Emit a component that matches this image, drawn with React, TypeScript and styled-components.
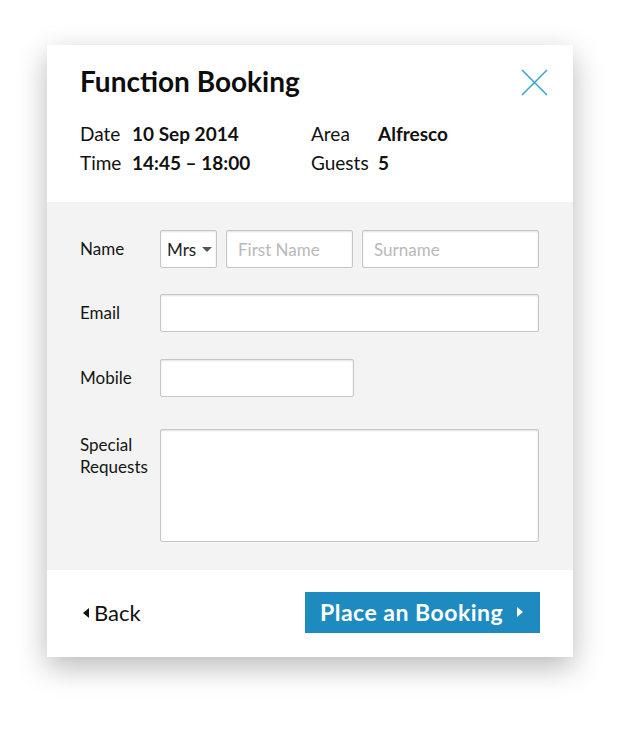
import React from 'react';
import styled, { createGlobalStyle } from 'styled-components';

const GlobalStyle = createGlobalStyle`
  html, body {
    margin: 0;
    padding: 0;
    background: #ffffff;
  }
  body {
    font-family: 'Lato', 'Noto Sans', sans-serif;
    color: #111;
  }
`;

const Page = styled.div`
  padding: 45px 48px 88px 47px;
`;

const Card = styled.div`
  width: 526px;
  background: #fff;
  box-shadow: 0 10px 28px rgba(0, 0, 0, 0.28);
`;

const Header = styled.div`
  position: relative;
  padding: 18px 33px 25px;
`;

const Title = styled.h1`
  margin: 0;
  font-size: 28px;
  line-height: 36px;
  font-weight: 700;
  color: #0d0d0d;
`;

const CloseButton = styled.button`
  position: absolute;
  top: 24px;
  right: 25px;
  width: 27px;
  height: 27px;
  padding: 0;
  border: none;
  background: transparent;
  cursor: pointer;
`;

const InfoGrid = styled.div`
  margin-top: 20px;
  display: grid;
  grid-template-columns: 52px 179px 67px auto;
  grid-auto-rows: 29px;
  align-items: center;
  font-size: 19px;
`;

const InfoLabel = styled.span`
  font-weight: 400;
`;

const InfoValue = styled.span`
  font-weight: 700;
`;

const Body = styled.div`
  background: #f3f3f3;
  padding: 28px 34px 28px 33px;
  display: flex;
  flex-direction: column;
  gap: 26px;
`;

const Row = styled.div<{ $top?: boolean; $shift?: number }>`
  display: flex;
  align-items: ${(p) => (p.$top ? 'flex-start' : 'center')};
  margin-top: ${(p) => p.$shift ?? 0}px;
`;

const Label = styled.label<{ $top?: boolean }>`
  width: 80px;
  flex-shrink: 0;
  font-size: 17px;
  line-height: 22px;
  color: #151515;
  padding-top: ${(p) => (p.$top ? '5px' : '0')};
`;

const Fields = styled.div`
  display: flex;
  gap: 9px;
  flex: 1;
`;

const inputBase = `
  box-sizing: border-box;
  height: 38px;
  border: 1px solid #c6c6c6;
  border-radius: 2px;
  background: #fff;
  box-shadow: inset 0 1px 2px rgba(0, 0, 0, 0.12);
  font-family: 'Lato', 'Noto Sans', sans-serif;
  font-size: 17px;
  color: #222;
  padding: 0 11px;
  outline: none;
  &::placeholder {
    color: #b9b9b9;
  }
`;

const TextInput = styled.input<{ $width?: number }>`
  ${inputBase}
  width: ${(p) => (p.$width ? `${p.$width}px` : '100%')};
  flex: ${(p) => (p.$width ? 'none' : '1')};
`;

const TitleSelect = styled.button`
  ${inputBase}
  width: 57px;
  flex: none;
  display: flex;
  align-items: center;
  gap: 6px;
  padding: 0 6px;
  cursor: pointer;
  &::after {
    content: '';
    border-left: 5px solid transparent;
    border-right: 5px solid transparent;
    border-top: 5px solid #555;
  }
`;

const TextArea = styled.textarea`
  ${inputBase}
  flex: 1;
  height: 113px;
  padding: 8px 11px;
  resize: none;
`;

const Footer = styled.div`
  display: flex;
  align-items: center;
  justify-content: space-between;
  padding: 22px 33px 24px 36px;
`;

const BackLink = styled.a`
  display: flex;
  align-items: center;
  gap: 5px;
  font-size: 22px;
  color: #111;
  text-decoration: none;
  cursor: pointer;
  &::before {
    content: '';
    border-top: 5px solid transparent;
    border-bottom: 5px solid transparent;
    border-right: 6px solid #111;
  }
`;

const PrimaryButton = styled.button`
  box-sizing: border-box;
  width: 235px;
  height: 41px;
  display: flex;
  align-items: center;
  gap: 14px;
  padding: 0 0 2px 15px;
  border: none;
  background: #1d8bc0;
  color: #fff;
  font-family: 'Lato', 'Noto Sans', sans-serif;
  font-size: 23px;
  letter-spacing: 0.5px;
  font-weight: 700;
  cursor: pointer;
  &::after {
    content: '';
    border-top: 5px solid transparent;
    border-bottom: 5px solid transparent;
    border-left: 6px solid #fff;
  }
`;

const App = () => {
  return (
    <Page>
      <GlobalStyle />
      <Card>
        <Header>
          <Title>Function Booking</Title>
          <CloseButton aria-label="Close">
            <svg width="27" height="27" viewBox="0 0 27 27">
              <path d="M1 1 L26 26 M26 1 L1 26" stroke="#35a2d2" strokeWidth="1.5" fill="none" />
            </svg>
          </CloseButton>
          <InfoGrid>
            <InfoLabel>Date</InfoLabel>
            <InfoValue>10 Sep 2014</InfoValue>
            <InfoLabel>Area</InfoLabel>
            <InfoValue>Alfresco</InfoValue>
            <InfoLabel>Time</InfoLabel>
            <InfoValue>14:45 – 18:00</InfoValue>
            <InfoLabel>Guests</InfoLabel>
            <InfoValue>5</InfoValue>
          </InfoGrid>
        </Header>
        <Body>
          <Row>
            <Label>Name</Label>
            <Fields>
              <TitleSelect type="button">Mrs</TitleSelect>
              <TextInput $width={127} placeholder="First Name" />
              <TextInput placeholder="Surname" />
            </Fields>
          </Row>
          <Row>
            <Label>Email</Label>
            <TextInput type="email" />
          </Row>
          <Row $shift={1}>
            <Label>Mobile</Label>
            <TextInput $width={194} type="tel" />
          </Row>
          <Row $top $shift={6}>
            <Label $top>Special Requests</Label>
            <TextArea />
          </Row>
        </Body>
        <Footer>
          <BackLink>Back</BackLink>
          <PrimaryButton type="button">Place an Booking</PrimaryButton>
        </Footer>
      </Card>
    </Page>
  );
};

export default App;
